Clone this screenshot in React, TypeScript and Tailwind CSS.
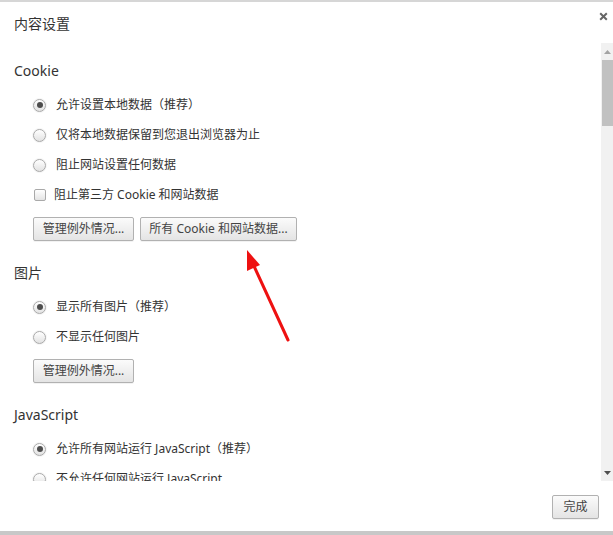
import type { ReactNode } from "react"

const FONT = { fontFamily: '"Noto Sans", "Noto Sans CJK SC", sans-serif' }

function Radio({ checked, children }: { checked?: boolean; children: ReactNode }) {
  return (
    <div className="flex items-center h-[30px] gap-[10px]">
      <span className="w-[13px] h-[13px] rounded-full border border-[#a9a9a9] bg-gradient-to-b from-[#ffffff] to-[#e2e2e2] flex items-center justify-center shadow-[0_0_0_1px_rgba(0,0,0,0.04)]">
        {checked && <span className="w-[6px] h-[6px] rounded-full bg-[#4d4d4d]" />}
      </span>
      <span className="text-[12px] text-[#333] leading-none">{children}</span>
    </div>
  )
}

function Check({ children }: { children: ReactNode }) {
  return (
    <div className="flex items-center h-[30px] gap-[8px] pl-[1px]">
      <span className="w-[12px] h-[12px] rounded-[2px] border border-[#a9a9a9] bg-gradient-to-b from-[#ffffff] to-[#e4e4e4]" />
      <span className="text-[12px] text-[#333] leading-none">{children}</span>
    </div>
  )
}

function Btn({ children, className = "" }: { children: ReactNode; className?: string }) {
  return (
    <button className={`h-[24px] rounded-[2px] border border-[#b1b1b1] bg-gradient-to-b from-[#fbfbfb] to-[#e4e4e4] text-[12px] text-[#444] leading-none flex items-center justify-center shadow-[0_1px_0_rgba(0,0,0,0.05)] ${className}`}>
      {children}
    </button>
  )
}

function Section({ title, children }: { title: string; children: ReactNode }) {
  return (
    <div className="mb-[22px]">
      <div className="h-[20px] text-[14px] leading-[20px] text-[#333]">{title}</div>
      <div className="pl-[19px] mt-[9px]">{children}</div>
    </div>
  )
}

export default function App() {
  return (
    <div
      style={FONT}
      className="relative w-[613px] h-[535px] bg-white flex flex-col border-t-2 border-t-[#d6d6d6] border-b-4 border-b-[#c8c8c8] overflow-hidden"
    >
      {/* header */}
      <div className="h-[41px] flex items-start justify-between pl-[14px]">
        <div className="mt-[12px] text-[14px] leading-[20px] text-[#333]">内容设置</div>
        <svg className="mt-[10px] mr-[5px]" width="9" height="9" viewBox="0 0 9 9">
          <path d="M1.2 1.2 L7.8 7.8 M7.8 1.2 L1.2 7.8" stroke="#666" strokeWidth="2" />
        </svg>
      </div>

      {/* scrolling body */}
      <div className="h-[438px] flex">
        <div className="flex-1 overflow-hidden pl-[14px] pt-[18px]">
          <Section title="Cookie">
            <Radio checked>允许设置本地数据（推荐）</Radio>
            <Radio>仅将本地数据保留到您退出浏览器为止</Radio>
            <Radio>阻止网站设置任何数据</Radio>
            <Check>阻止第三方 Cookie 和网站数据</Check>
            <div className="flex gap-[6px] mt-[7px]">
              <Btn className="w-[101px]">管理例外情况...</Btn>
              <Btn className="w-[157px]">所有 Cookie 和网站数据...</Btn>
            </div>
          </Section>
          <Section title="图片">
            <Radio checked>显示所有图片（推荐）</Radio>
            <Radio>不显示任何图片</Radio>
            <div className="flex mt-[7px]">
              <Btn className="w-[101px]">管理例外情况...</Btn>
            </div>
          </Section>
          <Section title="JavaScript">
            <Radio checked>允许所有网站运行 JavaScript（推荐）</Radio>
            <Radio>不允许任何网站运行 JavaScript</Radio>
          </Section>
        </div>

        {/* scrollbar */}
        <div className="w-[12px] bg-[#f1f1f1] flex flex-col">
          <div className="h-[17px] flex items-center justify-center">
            <svg width="7" height="4" viewBox="0 0 7 4">
              <path d="M0 4 L3.5 0 L7 4 Z" fill="#a3a3a3" />
            </svg>
          </div>
          <div className="h-[66px] bg-[#c1c1c1] ml-[1px]" />
          <div className="flex-1" />
          <div className="h-[17px] flex items-center justify-center">
            <svg width="7" height="4" viewBox="0 0 7 4">
              <path d="M0 0 L7 0 L3.5 4 Z" fill="#505050" />
            </svg>
          </div>
        </div>
      </div>

      {/* footer */}
      <div className="flex-1 flex justify-end items-start pt-[14px] pr-[14px]">
        <Btn className="w-[47px] h-[23px]">完成</Btn>
      </div>

      {/* annotation arrow */}
      <svg className="absolute left-[236px] top-[238px]" width="64" height="110" viewBox="0 0 64 110">
        <path d="M52 100 L17 24" stroke="#ee1111" strokeWidth="3" strokeLinecap="round" />
        <path d="M11 10 L24 25 L11 31 Z" fill="#ee1111" />
      </svg>
    </div>
  )
}
